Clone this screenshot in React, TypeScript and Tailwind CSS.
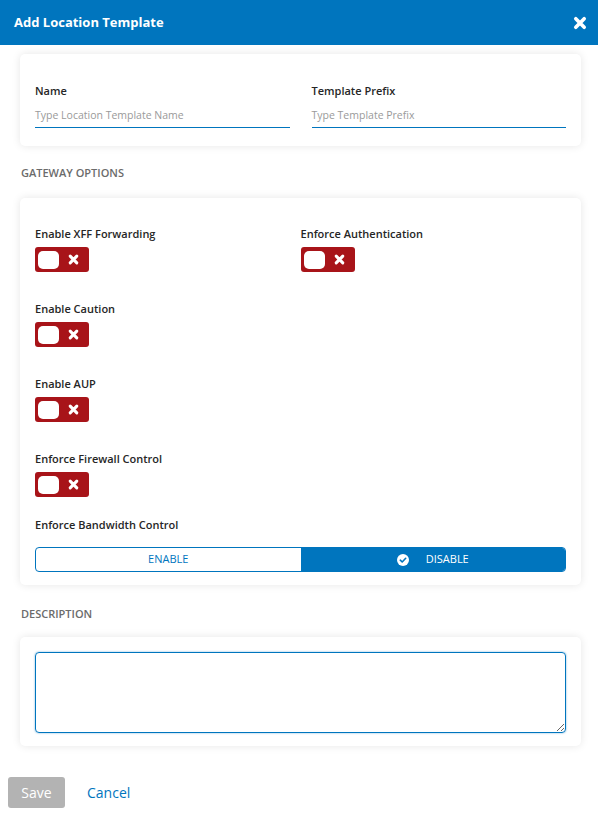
import React from "react";

const font = { fontFamily: '"Open Sans", "Noto Sans", sans-serif' };

function Toggle() {
  return (
    <div className="flex h-[25px] w-[54px] items-center rounded-[3px] bg-[#a81419] px-[3px]">
      <div className="h-[18px] w-[21px] rounded-[5px] bg-white" />
      <svg className="ml-[9px]" width="11" height="11" viewBox="0 0 10 10">
        <path d="M2 2 L8 8 M8 2 L2 8" stroke="white" strokeWidth="2.8" strokeLinecap="round" />
      </svg>
    </div>
  );
}

function ToggleField({ label }: { label: string }) {
  return (
    <div className="flex flex-col">
      <div className="text-[11px] font-semibold leading-[16px] text-[#262626]">{label}</div>
      <div className="mt-[5px]">
        <Toggle />
      </div>
    </div>
  );
}

export default function App() {
  return (
    <div className="relative h-[820px] w-[598px] bg-white" style={font}>
      <div className="flex h-[45px] items-center justify-between bg-[#0075be] pl-[14px] pr-[11px]">
        <div className="pt-[1px] text-[13px] font-bold text-white">Add Location Template</div>
        <svg width="14" height="14" viewBox="0 0 10 10">
          <path d="M2 2 L8 8 M8 2 L2 8" stroke="white" strokeWidth="2.6" strokeLinecap="round" />
        </svg>
      </div>

      <div className="pl-[20px] pr-[17px] pt-[9px]">
        <div className="rounded-[5px] bg-white px-[15px] pb-[18px] pt-[29px] shadow-[0_0_8px_rgba(0,0,0,0.1)]">
          <div className="grid grid-cols-2 gap-x-[22px]">
            <div>
              <div className="text-[11px] font-semibold leading-[16px] text-[#262626]">Name</div>
              <div className="mt-[9px] border-b border-[#0075be] pb-[5px] text-[10.5px] leading-[14px] text-[#9a9a9a]">
                Type Location Template Name
              </div>
            </div>
            <div>
              <div className="text-[11px] font-semibold leading-[16px] text-[#262626]">Template Prefix</div>
              <div className="mt-[9px] border-b border-[#0075be] pb-[5px] text-[10.5px] leading-[14px] text-[#9a9a9a]">
                Type Template Prefix
              </div>
            </div>
          </div>
        </div>

        <div className="mt-[19px] pl-[1px] text-[11px] font-semibold leading-[16px] text-[#6b6b6b]">GATEWAY OPTIONS</div>

        <div className="mt-[17px] rounded-[5px] bg-white px-[15px] pb-[13px] pt-[28px] shadow-[0_0_8px_rgba(0,0,0,0.1)]">
          <div className="grid grid-cols-2">
            <ToggleField label="Enable XFF Forwarding" />
            <ToggleField label="Enforce Authentication" />
          </div>
          <div className="mt-[29px]">
            <ToggleField label="Enable Caution" />
          </div>
          <div className="mt-[29px]">
            <ToggleField label="Enable AUP" />
          </div>
          <div className="mt-[29px]">
            <ToggleField label="Enforce Firewall Control" />
          </div>
          <div className="mt-[20px] text-[11px] font-semibold leading-[16px] text-[#262626]">Enforce Bandwidth Control</div>
          <div className="mt-[14px] flex h-[25px] overflow-hidden rounded-[4px] border border-[#0075be]">
            <div className="flex flex-1 items-center justify-center text-[11px] text-[#0075be]">ENABLE</div>
            <div className="flex flex-1 items-center justify-center gap-[17px] bg-[#0075be] text-[11px] text-white">
              <svg width="12" height="12" viewBox="0 0 12 12">
                <circle cx="6" cy="6" r="6" fill="white" />
                <path d="M3.3 6.2 L5.2 8 L8.7 4.3" stroke="#0075be" strokeWidth="1.6" fill="none" strokeLinecap="round" strokeLinejoin="round" />
              </svg>
              <span>DISABLE</span>
            </div>
          </div>
        </div>

        <div className="mt-[21px] pl-[1px] text-[11px] font-semibold leading-[16px] text-[#6b6b6b]">DESCRIPTION</div>

        <div className="mt-[15px] rounded-[5px] bg-white px-[15px] pb-[13px] pt-[15px] shadow-[0_0_8px_rgba(0,0,0,0.1)]">
          <textarea className="block h-[81px] w-full resize-y rounded-[4px] border border-[#0075be] shadow-[0_0_2px_rgba(0,117,190,0.6)] outline-none" />
        </div>
      </div>

      <div className="mt-[31px] flex items-center pl-[8px]">
        <button className="h-[31px] w-[57px] rounded-[3px] bg-[#b3b3b3] text-[14px] text-white">Save</button>
        <span className="ml-[22px] text-[14px] text-[#0075be]">Cancel</span>
      </div>
    </div>
  );
}
